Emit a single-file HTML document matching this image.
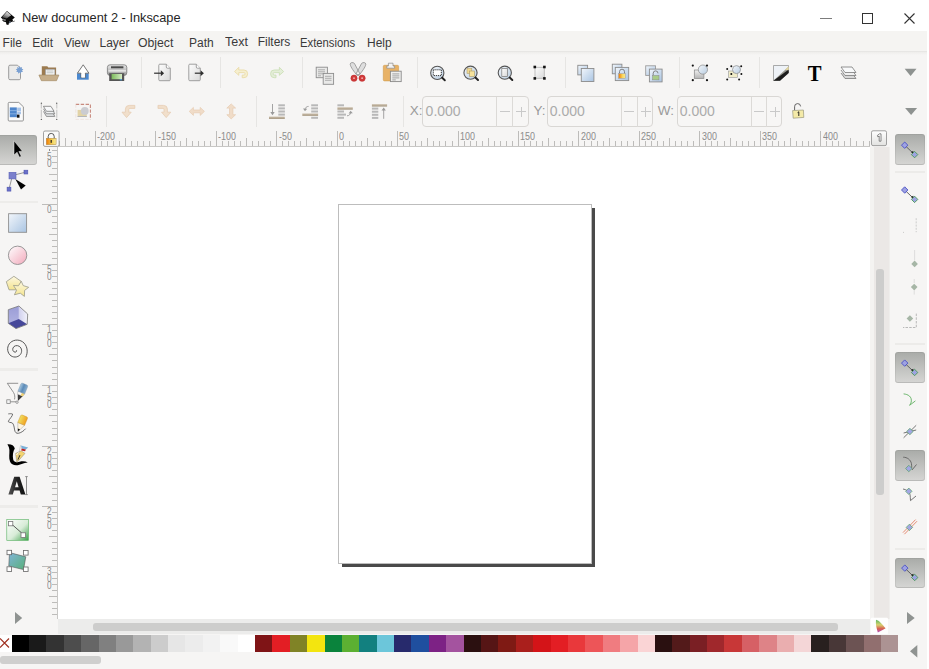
<!DOCTYPE html>
<html><head><meta charset="utf-8"><style>
html,body{margin:0;padding:0;}
body{width:929px;height:669px;overflow:hidden;position:relative;background:#f6f5f4;font-family:"Liberation Sans",sans-serif;}
svg{overflow:visible}
</style></head><body>
<div style="position:absolute;left:0px;top:0px;width:929px;height:31px;background:#fff"></div><div style="position:absolute;left:22.2px;top:11.6px;white-space:nowrap;font-size:12.6px;line-height:12px;color:#262626;transform:scaleX(1.016);transform-origin:0 0">New document 2 - Inkscape</div><div style="position:absolute;left:820.3px;top:18.1px;width:11.7px;height:1.3px;background:#7c7c7c"></div><div style="position:absolute;left:861.9px;top:12.9px;width:9.3px;height:9.6px;border:1px solid #333"></div><svg style="position:absolute;left:904px;top:13px" width="11" height="11" viewBox="0 0 11 11"><path d="M0.5 0.5L10.5 10.5M10.5 0.5L0.5 10.5" stroke="#333" stroke-width="1.1"/></svg><div style="position:absolute;left:0px;top:31px;width:927px;height:20px;background:#f5f4f2"></div><div style="position:absolute;left:2.6px;top:37px;white-space:nowrap;font-size:12px;line-height:12px;color:#3a3a3a;transform:scaleX(1);transform-origin:0 0">File</div><div style="position:absolute;left:32.3px;top:37px;white-space:nowrap;font-size:12px;line-height:12px;color:#3a3a3a;transform:scaleX(1);transform-origin:0 0">Edit</div><div style="position:absolute;left:63.9px;top:37px;white-space:nowrap;font-size:12px;line-height:12px;color:#3a3a3a;transform:scaleX(1);transform-origin:0 0">View</div><div style="position:absolute;left:99.5px;top:37px;white-space:nowrap;font-size:12px;line-height:12px;color:#3a3a3a;transform:scaleX(1);transform-origin:0 0">Layer</div><div style="position:absolute;left:138.2px;top:37px;white-space:nowrap;font-size:12px;line-height:12px;color:#3a3a3a;transform:scaleX(1.02);transform-origin:0 0">Object</div><div style="position:absolute;left:189px;top:37px;white-space:nowrap;font-size:12px;line-height:12px;color:#3a3a3a;transform:scaleX(1);transform-origin:0 0">Path</div><div style="position:absolute;left:224.5px;top:36px;white-space:nowrap;font-size:12px;line-height:12px;color:#3a3a3a;transform:scaleX(1.04);transform-origin:0 0">Text</div><div style="position:absolute;left:257.7px;top:36px;white-space:nowrap;font-size:12px;line-height:12px;color:#3a3a3a;transform:scaleX(1);transform-origin:0 0">Filters</div><div style="position:absolute;left:300.3px;top:37px;white-space:nowrap;font-size:12px;line-height:12px;color:#3a3a3a;transform:scaleX(0.94);transform-origin:0 0">Extensions</div><div style="position:absolute;left:367px;top:37px;white-space:nowrap;font-size:12px;line-height:12px;color:#3a3a3a;transform:scaleX(1);transform-origin:0 0">Help</div><div style="position:absolute;left:0px;top:51px;width:927px;height:77px;background:#f6f5f4"></div><div style="position:absolute;left:0px;top:51px;width:927px;height:1px;background:#e7e6e4"></div><div style="position:absolute;left:0px;top:52px;width:927px;height:3px;background:linear-gradient(#eeedeb,#f6f5f4)"></div><div style="position:absolute;left:141px;top:57px;width:1px;height:31px;background:#e6e5e3"></div><div style="position:absolute;left:220px;top:57px;width:1px;height:31px;background:#e6e5e3"></div><div style="position:absolute;left:302px;top:57px;width:1px;height:31px;background:#e6e5e3"></div><div style="position:absolute;left:416.5px;top:57px;width:1px;height:31px;background:#e6e5e3"></div><div style="position:absolute;left:564.5px;top:57px;width:1px;height:31px;background:#e6e5e3"></div><div style="position:absolute;left:678.5px;top:57px;width:1px;height:31px;background:#e6e5e3"></div><div style="position:absolute;left:759px;top:57px;width:1px;height:31px;background:#e6e5e3"></div><div style="position:absolute;left:106px;top:96px;width:1px;height:31px;background:#e6e5e3"></div><div style="position:absolute;left:255.7px;top:96px;width:1px;height:31px;background:#e6e5e3"></div><div style="position:absolute;left:402.7px;top:96px;width:1px;height:31px;background:#e6e5e3"></div><div style="position:absolute;left:409.8px;top:104px;white-space:nowrap;font-size:13.5px;line-height:14px;color:#9a9a9a">X:</div><div style="position:absolute;left:422.3px;top:95.7px;width:106.49999999999994px;height:31.7px;box-sizing:border-box;border:1px solid #d9d7d4;border-radius:4px;background:#f7f6f5"></div><div style="position:absolute;left:496.4px;top:96.5px;width:1px;height:30px;background:#dcdad7"></div><div style="position:absolute;left:512.3px;top:96.5px;width:1px;height:30px;background:#dcdad7"></div><div style="position:absolute;left:425.6px;top:104px;white-space:nowrap;font-size:14px;line-height:14px;color:#ababab">0.000</div><div style="position:absolute;left:499.9px;top:111px;width:10px;height:1px;background:#c9c9c9"></div><div style="position:absolute;left:516.3px;top:111px;width:10px;height:1px;background:#c9c9c9"></div><div style="position:absolute;left:520.8px;top:106.5px;width:1px;height:10px;background:#c9c9c9"></div><div style="position:absolute;left:533.5px;top:104px;white-space:nowrap;font-size:13.5px;line-height:14px;color:#9a9a9a">Y:</div><div style="position:absolute;left:546.5px;top:95.7px;width:106.20000000000005px;height:31.7px;box-sizing:border-box;border:1px solid #d9d7d4;border-radius:4px;background:#f7f6f5"></div><div style="position:absolute;left:620.7px;top:96.5px;width:1px;height:30px;background:#dcdad7"></div><div style="position:absolute;left:636.5px;top:96.5px;width:1px;height:30px;background:#dcdad7"></div><div style="position:absolute;left:549.8px;top:104px;white-space:nowrap;font-size:14px;line-height:14px;color:#ababab">0.000</div><div style="position:absolute;left:624.2px;top:111px;width:10px;height:1px;background:#c9c9c9"></div><div style="position:absolute;left:640.5px;top:111px;width:10px;height:1px;background:#c9c9c9"></div><div style="position:absolute;left:645.0px;top:106.5px;width:1px;height:10px;background:#c9c9c9"></div><div style="position:absolute;left:657.7px;top:104px;white-space:nowrap;font-size:13.5px;line-height:14px;color:#9a9a9a">W:</div><div style="position:absolute;left:676.5px;top:95.7px;width:105.5px;height:31.7px;box-sizing:border-box;border:1px solid #d9d7d4;border-radius:4px;background:#f7f6f5"></div><div style="position:absolute;left:750.5px;top:96.5px;width:1px;height:30px;background:#dcdad7"></div><div style="position:absolute;left:766px;top:96.5px;width:1px;height:30px;background:#dcdad7"></div><div style="position:absolute;left:679.8px;top:104px;white-space:nowrap;font-size:14px;line-height:14px;color:#ababab">0.000</div><div style="position:absolute;left:754.0px;top:111px;width:10px;height:1px;background:#c9c9c9"></div><div style="position:absolute;left:770px;top:111px;width:10px;height:1px;background:#c9c9c9"></div><div style="position:absolute;left:774.5px;top:106.5px;width:1px;height:10px;background:#c9c9c9"></div><div style="position:absolute;left:58px;top:128px;width:812px;height:19px;background:#f6f5f4"></div><div style="position:absolute;left:38px;top:147px;width:20px;height:472px;background:#f6f5f4"></div><svg style="position:absolute;left:58px;top:128px" width="812" height="19" viewBox="0 0 812 19"><g stroke="#bdbcba" stroke-width="1"><line x1="1.5" y1="13" x2="1.5" y2="19" /><line x1="7.5" y1="10" x2="7.5" y2="19" /><line x1="13.5" y1="13" x2="13.5" y2="19" /><line x1="19.5" y1="13" x2="19.5" y2="19" /><line x1="25.5" y1="13" x2="25.5" y2="19" /><line x1="31.5" y1="13" x2="31.5" y2="19" /><line x1="37.5" y1="3" x2="37.5" y2="19" /><line x1="43.5" y1="13" x2="43.5" y2="19" /><line x1="49.5" y1="13" x2="49.5" y2="19" /><line x1="55.5" y1="13" x2="55.5" y2="19" /><line x1="61.5" y1="13" x2="61.5" y2="19" /><line x1="67.5" y1="10" x2="67.5" y2="19" /><line x1="73.5" y1="13" x2="73.5" y2="19" /><line x1="79.5" y1="13" x2="79.5" y2="19" /><line x1="85.5" y1="13" x2="85.5" y2="19" /><line x1="91.5" y1="13" x2="91.5" y2="19" /><line x1="97.5" y1="3" x2="97.5" y2="19" /><line x1="103.5" y1="13" x2="103.5" y2="19" /><line x1="109.5" y1="13" x2="109.5" y2="19" /><line x1="116.5" y1="13" x2="116.5" y2="19" /><line x1="122.5" y1="13" x2="122.5" y2="19" /><line x1="128.5" y1="10" x2="128.5" y2="19" /><line x1="134.5" y1="13" x2="134.5" y2="19" /><line x1="140.5" y1="13" x2="140.5" y2="19" /><line x1="146.5" y1="13" x2="146.5" y2="19" /><line x1="152.5" y1="13" x2="152.5" y2="19" /><line x1="158.5" y1="3" x2="158.5" y2="19" /><line x1="164.5" y1="13" x2="164.5" y2="19" /><line x1="170.5" y1="13" x2="170.5" y2="19" /><line x1="176.5" y1="13" x2="176.5" y2="19" /><line x1="182.5" y1="13" x2="182.5" y2="19" /><line x1="188.5" y1="10" x2="188.5" y2="19" /><line x1="194.5" y1="13" x2="194.5" y2="19" /><line x1="200.5" y1="13" x2="200.5" y2="19" /><line x1="206.5" y1="13" x2="206.5" y2="19" /><line x1="212.5" y1="13" x2="212.5" y2="19" /><line x1="218.5" y1="3" x2="218.5" y2="19" /><line x1="224.5" y1="13" x2="224.5" y2="19" /><line x1="230.5" y1="13" x2="230.5" y2="19" /><line x1="236.5" y1="13" x2="236.5" y2="19" /><line x1="242.5" y1="13" x2="242.5" y2="19" /><line x1="248.5" y1="10" x2="248.5" y2="19" /><line x1="255.5" y1="13" x2="255.5" y2="19" /><line x1="261.5" y1="13" x2="261.5" y2="19" /><line x1="267.5" y1="13" x2="267.5" y2="19" /><line x1="273.5" y1="13" x2="273.5" y2="19" /><line x1="279.5" y1="3" x2="279.5" y2="19" /><line x1="285.5" y1="13" x2="285.5" y2="19" /><line x1="291.5" y1="13" x2="291.5" y2="19" /><line x1="297.5" y1="13" x2="297.5" y2="19" /><line x1="303.5" y1="13" x2="303.5" y2="19" /><line x1="309.5" y1="10" x2="309.5" y2="19" /><line x1="315.5" y1="13" x2="315.5" y2="19" /><line x1="321.5" y1="13" x2="321.5" y2="19" /><line x1="327.5" y1="13" x2="327.5" y2="19" /><line x1="333.5" y1="13" x2="333.5" y2="19" /><line x1="339.5" y1="3" x2="339.5" y2="19" /><line x1="345.5" y1="13" x2="345.5" y2="19" /><line x1="351.5" y1="13" x2="351.5" y2="19" /><line x1="357.5" y1="13" x2="357.5" y2="19" /><line x1="363.5" y1="13" x2="363.5" y2="19" /><line x1="369.5" y1="10" x2="369.5" y2="19" /><line x1="375.5" y1="13" x2="375.5" y2="19" /><line x1="381.5" y1="13" x2="381.5" y2="19" /><line x1="387.5" y1="13" x2="387.5" y2="19" /><line x1="394.5" y1="13" x2="394.5" y2="19" /><line x1="400.5" y1="3" x2="400.5" y2="19" /><line x1="406.5" y1="13" x2="406.5" y2="19" /><line x1="412.5" y1="13" x2="412.5" y2="19" /><line x1="418.5" y1="13" x2="418.5" y2="19" /><line x1="424.5" y1="13" x2="424.5" y2="19" /><line x1="430.5" y1="10" x2="430.5" y2="19" /><line x1="436.5" y1="13" x2="436.5" y2="19" /><line x1="442.5" y1="13" x2="442.5" y2="19" /><line x1="448.5" y1="13" x2="448.5" y2="19" /><line x1="454.5" y1="13" x2="454.5" y2="19" /><line x1="460.5" y1="3" x2="460.5" y2="19" /><line x1="466.5" y1="13" x2="466.5" y2="19" /><line x1="472.5" y1="13" x2="472.5" y2="19" /><line x1="478.5" y1="13" x2="478.5" y2="19" /><line x1="484.5" y1="13" x2="484.5" y2="19" /><line x1="490.5" y1="10" x2="490.5" y2="19" /><line x1="496.5" y1="13" x2="496.5" y2="19" /><line x1="502.5" y1="13" x2="502.5" y2="19" /><line x1="508.5" y1="13" x2="508.5" y2="19" /><line x1="514.5" y1="13" x2="514.5" y2="19" /><line x1="520.5" y1="3" x2="520.5" y2="19" /><line x1="526.5" y1="13" x2="526.5" y2="19" /><line x1="533.5" y1="13" x2="533.5" y2="19" /><line x1="539.5" y1="13" x2="539.5" y2="19" /><line x1="545.5" y1="13" x2="545.5" y2="19" /><line x1="551.5" y1="10" x2="551.5" y2="19" /><line x1="557.5" y1="13" x2="557.5" y2="19" /><line x1="563.5" y1="13" x2="563.5" y2="19" /><line x1="569.5" y1="13" x2="569.5" y2="19" /><line x1="575.5" y1="13" x2="575.5" y2="19" /><line x1="581.5" y1="3" x2="581.5" y2="19" /><line x1="587.5" y1="13" x2="587.5" y2="19" /><line x1="593.5" y1="13" x2="593.5" y2="19" /><line x1="599.5" y1="13" x2="599.5" y2="19" /><line x1="605.5" y1="13" x2="605.5" y2="19" /><line x1="611.5" y1="10" x2="611.5" y2="19" /><line x1="617.5" y1="13" x2="617.5" y2="19" /><line x1="623.5" y1="13" x2="623.5" y2="19" /><line x1="629.5" y1="13" x2="629.5" y2="19" /><line x1="635.5" y1="13" x2="635.5" y2="19" /><line x1="641.5" y1="3" x2="641.5" y2="19" /><line x1="647.5" y1="13" x2="647.5" y2="19" /><line x1="653.5" y1="13" x2="653.5" y2="19" /><line x1="659.5" y1="13" x2="659.5" y2="19" /><line x1="666.5" y1="13" x2="666.5" y2="19" /><line x1="672.5" y1="10" x2="672.5" y2="19" /><line x1="678.5" y1="13" x2="678.5" y2="19" /><line x1="684.5" y1="13" x2="684.5" y2="19" /><line x1="690.5" y1="13" x2="690.5" y2="19" /><line x1="696.5" y1="13" x2="696.5" y2="19" /><line x1="702.5" y1="3" x2="702.5" y2="19" /><line x1="708.5" y1="13" x2="708.5" y2="19" /><line x1="714.5" y1="13" x2="714.5" y2="19" /><line x1="720.5" y1="13" x2="720.5" y2="19" /><line x1="726.5" y1="13" x2="726.5" y2="19" /><line x1="732.5" y1="10" x2="732.5" y2="19" /><line x1="738.5" y1="13" x2="738.5" y2="19" /><line x1="744.5" y1="13" x2="744.5" y2="19" /><line x1="750.5" y1="13" x2="750.5" y2="19" /><line x1="756.5" y1="13" x2="756.5" y2="19" /><line x1="762.5" y1="3" x2="762.5" y2="19" /><line x1="768.5" y1="13" x2="768.5" y2="19" /><line x1="774.5" y1="13" x2="774.5" y2="19" /><line x1="780.5" y1="13" x2="780.5" y2="19" /><line x1="786.5" y1="13" x2="786.5" y2="19" /><line x1="792.5" y1="10" x2="792.5" y2="19" /><line x1="798.5" y1="13" x2="798.5" y2="19" /><line x1="805.5" y1="13" x2="805.5" y2="19" /><line x1="811.5" y1="13" x2="811.5" y2="19" /></g><rect x="0" y="18" width="812" height="1" fill="#c8c7c5"/></svg><div style="position:absolute;left:97.24999999999999px;top:131.6px;white-space:nowrap;font-size:10.4px;line-height:9px;color:#8c8c8c;transform:scaleX(0.86);transform-origin:0 0">&#8209;200</div><div style="position:absolute;left:157.6875px;top:131.6px;white-space:nowrap;font-size:10.4px;line-height:9px;color:#8c8c8c;transform:scaleX(0.86);transform-origin:0 0">&#8209;150</div><div style="position:absolute;left:218.125px;top:131.6px;white-space:nowrap;font-size:10.4px;line-height:9px;color:#8c8c8c;transform:scaleX(0.86);transform-origin:0 0">&#8209;100</div><div style="position:absolute;left:278.5625px;top:131.6px;white-space:nowrap;font-size:10.4px;line-height:9px;color:#8c8c8c;transform:scaleX(0.86);transform-origin:0 0">&#8209;50</div><div style="position:absolute;left:339.0px;top:131.6px;white-space:nowrap;font-size:10.4px;line-height:9px;color:#8c8c8c;transform:scaleX(0.86);transform-origin:0 0">0</div><div style="position:absolute;left:399.4375px;top:131.6px;white-space:nowrap;font-size:10.4px;line-height:9px;color:#8c8c8c;transform:scaleX(0.86);transform-origin:0 0">50</div><div style="position:absolute;left:459.875px;top:131.6px;white-space:nowrap;font-size:10.4px;line-height:9px;color:#8c8c8c;transform:scaleX(0.86);transform-origin:0 0">100</div><div style="position:absolute;left:520.3125px;top:131.6px;white-space:nowrap;font-size:10.4px;line-height:9px;color:#8c8c8c;transform:scaleX(0.86);transform-origin:0 0">150</div><div style="position:absolute;left:580.75px;top:131.6px;white-space:nowrap;font-size:10.4px;line-height:9px;color:#8c8c8c;transform:scaleX(0.86);transform-origin:0 0">200</div><div style="position:absolute;left:641.1875px;top:131.6px;white-space:nowrap;font-size:10.4px;line-height:9px;color:#8c8c8c;transform:scaleX(0.86);transform-origin:0 0">250</div><div style="position:absolute;left:701.625px;top:131.6px;white-space:nowrap;font-size:10.4px;line-height:9px;color:#8c8c8c;transform:scaleX(0.86);transform-origin:0 0">300</div><div style="position:absolute;left:762.0625px;top:131.6px;white-space:nowrap;font-size:10.4px;line-height:9px;color:#8c8c8c;transform:scaleX(0.86);transform-origin:0 0">350</div><div style="position:absolute;left:822.5px;top:131.6px;white-space:nowrap;font-size:10.4px;line-height:9px;color:#8c8c8c;transform:scaleX(0.86);transform-origin:0 0">400</div><svg style="position:absolute;left:38px;top:147px" width="20" height="472" viewBox="0 0 20 472"><g stroke="#bdbcba" stroke-width="1"><line x1="14" y1="3.5" x2="20" y2="3.5" /><line x1="14" y1="9.5" x2="20" y2="9.5" /><line x1="14" y1="15.5" x2="20" y2="15.5" /><line x1="14" y1="21.5" x2="20" y2="21.5" /><line x1="11" y1="27.5" x2="20" y2="27.5" /><line x1="14" y1="33.5" x2="20" y2="33.5" /><line x1="14" y1="39.5" x2="20" y2="39.5" /><line x1="14" y1="45.5" x2="20" y2="45.5" /><line x1="14" y1="51.5" x2="20" y2="51.5" /><line x1="4" y1="57.5" x2="20" y2="57.5" /><line x1="14" y1="63.5" x2="20" y2="63.5" /><line x1="14" y1="69.5" x2="20" y2="69.5" /><line x1="14" y1="75.5" x2="20" y2="75.5" /><line x1="14" y1="81.5" x2="20" y2="81.5" /><line x1="11" y1="87.5" x2="20" y2="87.5" /><line x1="14" y1="93.5" x2="20" y2="93.5" /><line x1="14" y1="99.5" x2="20" y2="99.5" /><line x1="14" y1="105.5" x2="20" y2="105.5" /><line x1="14" y1="111.5" x2="20" y2="111.5" /><line x1="4" y1="117.5" x2="20" y2="117.5" /><line x1="14" y1="123.5" x2="20" y2="123.5" /><line x1="14" y1="129.5" x2="20" y2="129.5" /><line x1="14" y1="135.5" x2="20" y2="135.5" /><line x1="14" y1="141.5" x2="20" y2="141.5" /><line x1="11" y1="147.5" x2="20" y2="147.5" /><line x1="14" y1="153.5" x2="20" y2="153.5" /><line x1="14" y1="159.5" x2="20" y2="159.5" /><line x1="14" y1="165.5" x2="20" y2="165.5" /><line x1="14" y1="171.5" x2="20" y2="171.5" /><line x1="4" y1="177.5" x2="20" y2="177.5" /><line x1="14" y1="183.5" x2="20" y2="183.5" /><line x1="14" y1="189.5" x2="20" y2="189.5" /><line x1="14" y1="195.5" x2="20" y2="195.5" /><line x1="14" y1="201.5" x2="20" y2="201.5" /><line x1="11" y1="207.5" x2="20" y2="207.5" /><line x1="14" y1="213.5" x2="20" y2="213.5" /><line x1="14" y1="220.5" x2="20" y2="220.5" /><line x1="14" y1="226.5" x2="20" y2="226.5" /><line x1="14" y1="232.5" x2="20" y2="232.5" /><line x1="4" y1="238.5" x2="20" y2="238.5" /><line x1="14" y1="244.5" x2="20" y2="244.5" /><line x1="14" y1="250.5" x2="20" y2="250.5" /><line x1="14" y1="256.5" x2="20" y2="256.5" /><line x1="14" y1="262.5" x2="20" y2="262.5" /><line x1="11" y1="268.5" x2="20" y2="268.5" /><line x1="14" y1="274.5" x2="20" y2="274.5" /><line x1="14" y1="281.5" x2="20" y2="281.5" /><line x1="14" y1="287.5" x2="20" y2="287.5" /><line x1="14" y1="293.5" x2="20" y2="293.5" /><line x1="4" y1="299.5" x2="20" y2="299.5" /><line x1="14" y1="305.5" x2="20" y2="305.5" /><line x1="14" y1="311.5" x2="20" y2="311.5" /><line x1="14" y1="317.5" x2="20" y2="317.5" /><line x1="14" y1="323.5" x2="20" y2="323.5" /><line x1="11" y1="329.5" x2="20" y2="329.5" /><line x1="14" y1="335.5" x2="20" y2="335.5" /><line x1="14" y1="341.5" x2="20" y2="341.5" /><line x1="14" y1="347.5" x2="20" y2="347.5" /><line x1="14" y1="353.5" x2="20" y2="353.5" /><line x1="4" y1="359.5" x2="20" y2="359.5" /><line x1="14" y1="365.5" x2="20" y2="365.5" /><line x1="14" y1="371.5" x2="20" y2="371.5" /><line x1="14" y1="377.5" x2="20" y2="377.5" /><line x1="14" y1="383.5" x2="20" y2="383.5" /><line x1="11" y1="389.5" x2="20" y2="389.5" /><line x1="14" y1="395.5" x2="20" y2="395.5" /><line x1="14" y1="401.5" x2="20" y2="401.5" /><line x1="14" y1="407.5" x2="20" y2="407.5" /><line x1="14" y1="413.5" x2="20" y2="413.5" /><line x1="4" y1="419.5" x2="20" y2="419.5" /><line x1="14" y1="425.5" x2="20" y2="425.5" /><line x1="14" y1="431.5" x2="20" y2="431.5" /><line x1="14" y1="437.5" x2="20" y2="437.5" /><line x1="14" y1="443.5" x2="20" y2="443.5" /><line x1="11" y1="449.5" x2="20" y2="449.5" /><line x1="14" y1="455.5" x2="20" y2="455.5" /><line x1="14" y1="461.5" x2="20" y2="461.5" /><line x1="14" y1="467.5" x2="20" y2="467.5" /></g><rect x="19" y="0" width="1" height="472" fill="#c8c7c5"/></svg><div style="position:absolute;left:48.8px;top:148.6px;width:1.1px;height:2.5px;background:#8c8c8c"></div><div style="position:absolute;left:46.9px;top:152.2px;white-space:nowrap;font-size:10.6px;line-height:8px;color:#8c8c8c;transform:scaleX(0.78);transform-origin:0 0">5</div><div style="position:absolute;left:46.9px;top:159.29999999999998px;white-space:nowrap;font-size:10.6px;line-height:8px;color:#8c8c8c;transform:scaleX(0.78);transform-origin:0 0">0</div><div style="position:absolute;left:46.9px;top:205.1px;white-space:nowrap;font-size:10.6px;line-height:8px;color:#8c8c8c;transform:scaleX(0.78);transform-origin:0 0">0</div><div style="position:absolute;left:46.9px;top:265.09999999999997px;white-space:nowrap;font-size:10.6px;line-height:8px;color:#8c8c8c;transform:scaleX(0.78);transform-origin:0 0">5</div><div style="position:absolute;left:46.9px;top:272.2px;white-space:nowrap;font-size:10.6px;line-height:8px;color:#8c8c8c;transform:scaleX(0.78);transform-origin:0 0">0</div><div style="position:absolute;left:46.9px;top:325.09999999999997px;white-space:nowrap;font-size:10.6px;line-height:8px;color:#8c8c8c;transform:scaleX(0.78);transform-origin:0 0">1</div><div style="position:absolute;left:46.9px;top:332.2px;white-space:nowrap;font-size:10.6px;line-height:8px;color:#8c8c8c;transform:scaleX(0.78);transform-origin:0 0">0</div><div style="position:absolute;left:46.9px;top:339.29999999999995px;white-space:nowrap;font-size:10.6px;line-height:8px;color:#8c8c8c;transform:scaleX(0.78);transform-origin:0 0">0</div><div style="position:absolute;left:46.9px;top:386.09999999999997px;white-space:nowrap;font-size:10.6px;line-height:8px;color:#8c8c8c;transform:scaleX(0.78);transform-origin:0 0">1</div><div style="position:absolute;left:46.9px;top:393.2px;white-space:nowrap;font-size:10.6px;line-height:8px;color:#8c8c8c;transform:scaleX(0.78);transform-origin:0 0">5</div><div style="position:absolute;left:46.9px;top:400.29999999999995px;white-space:nowrap;font-size:10.6px;line-height:8px;color:#8c8c8c;transform:scaleX(0.78);transform-origin:0 0">0</div><div style="position:absolute;left:46.9px;top:447.09999999999997px;white-space:nowrap;font-size:10.6px;line-height:8px;color:#8c8c8c;transform:scaleX(0.78);transform-origin:0 0">2</div><div style="position:absolute;left:46.9px;top:454.2px;white-space:nowrap;font-size:10.6px;line-height:8px;color:#8c8c8c;transform:scaleX(0.78);transform-origin:0 0">0</div><div style="position:absolute;left:46.9px;top:461.29999999999995px;white-space:nowrap;font-size:10.6px;line-height:8px;color:#8c8c8c;transform:scaleX(0.78);transform-origin:0 0">0</div><div style="position:absolute;left:46.9px;top:507.09999999999997px;white-space:nowrap;font-size:10.6px;line-height:8px;color:#8c8c8c;transform:scaleX(0.78);transform-origin:0 0">2</div><div style="position:absolute;left:46.9px;top:514.1999999999999px;white-space:nowrap;font-size:10.6px;line-height:8px;color:#8c8c8c;transform:scaleX(0.78);transform-origin:0 0">5</div><div style="position:absolute;left:46.9px;top:521.3px;white-space:nowrap;font-size:10.6px;line-height:8px;color:#8c8c8c;transform:scaleX(0.78);transform-origin:0 0">0</div><div style="position:absolute;left:46.9px;top:567.1px;white-space:nowrap;font-size:10.6px;line-height:8px;color:#8c8c8c;transform:scaleX(0.78);transform-origin:0 0">3</div><div style="position:absolute;left:46.9px;top:574.2px;white-space:nowrap;font-size:10.6px;line-height:8px;color:#8c8c8c;transform:scaleX(0.78);transform-origin:0 0">0</div><div style="position:absolute;left:46.9px;top:581.3000000000001px;white-space:nowrap;font-size:10.6px;line-height:8px;color:#8c8c8c;transform:scaleX(0.78);transform-origin:0 0">0</div><div style="position:absolute;left:58px;top:147px;width:812px;height:472px;background:#fff"></div><div style="position:absolute;left:338px;top:204px;width:254px;height:360px;box-sizing:border-box;border:1px solid #bdbdbd;background:#fff"></div><div style="position:absolute;left:591.8px;top:208px;width:3.2px;height:358.7px;background:#4a4a4a"></div><div style="position:absolute;left:341.5px;top:563.8px;width:253.5px;height:2.9px;background:#4a4a4a"></div><div style="position:absolute;left:870px;top:147px;width:4px;height:472px;background:#f4f3f1"></div><div style="position:absolute;left:874px;top:147px;width:14.7px;height:472px;background:#ebe8e6"></div><div style="position:absolute;left:875.7px;top:269px;width:8.3px;height:225.5px;background:#cdcdcc;border-radius:3px"></div><div style="position:absolute;left:58px;top:619px;width:812px;height:15px;background:#ececeb"></div><div style="position:absolute;left:93.1px;top:622.5px;width:745px;height:8.5px;background:#cdcdcc;border-radius:3px"></div><div style="position:absolute;left:871.3px;top:619px;width:16.5px;height:15px;background:#fbfbfa"></div><div style="position:absolute;left:0px;top:634.5px;width:11.6px;height:17.5px;background:#fff"></div><svg style="position:absolute;left:0px;top:638px" width="10" height="10" viewBox="0 0 10 10"><path d="M0 0.5L9 9.5M9 0.5L0 9.5" stroke="#a03020" stroke-width="1.2"/></svg><div style="position:absolute;left:11.6px;top:634.6px;width:17.436274509803923px;height:17.4px;background:#000000"></div><div style="position:absolute;left:28.98627450980392px;top:634.6px;width:17.436274509803923px;height:17.4px;background:#1a1a1a"></div><div style="position:absolute;left:46.372549019607845px;top:634.6px;width:17.436274509803923px;height:17.4px;background:#333333"></div><div style="position:absolute;left:63.758823529411764px;top:634.6px;width:17.436274509803923px;height:17.4px;background:#4d4d4d"></div><div style="position:absolute;left:81.14509803921568px;top:634.6px;width:17.436274509803923px;height:17.4px;background:#666666"></div><div style="position:absolute;left:98.53137254901961px;top:634.6px;width:17.436274509803923px;height:17.4px;background:#808080"></div><div style="position:absolute;left:115.91764705882352px;top:634.6px;width:17.436274509803923px;height:17.4px;background:#999999"></div><div style="position:absolute;left:133.30392156862746px;top:634.6px;width:17.436274509803923px;height:17.4px;background:#b3b3b3"></div><div style="position:absolute;left:150.69019607843137px;top:634.6px;width:17.436274509803923px;height:17.4px;background:#cccccc"></div><div style="position:absolute;left:168.07647058823528px;top:634.6px;width:17.436274509803923px;height:17.4px;background:#e6e6e6"></div><div style="position:absolute;left:185.46274509803922px;top:634.6px;width:17.436274509803923px;height:17.4px;background:#ececec"></div><div style="position:absolute;left:202.84901960784313px;top:634.6px;width:17.436274509803923px;height:17.4px;background:#f2f2f2"></div><div style="position:absolute;left:220.23529411764704px;top:634.6px;width:17.436274509803923px;height:17.4px;background:#f9f9f9"></div><div style="position:absolute;left:237.62156862745098px;top:634.6px;width:17.436274509803923px;height:17.4px;background:#ffffff"></div><div style="position:absolute;left:255.0078431372549px;top:634.6px;width:17.436274509803923px;height:17.4px;background:#7f1416"></div><div style="position:absolute;left:272.39411764705886px;top:634.6px;width:17.436274509803923px;height:17.4px;background:#e31e24"></div><div style="position:absolute;left:289.7803921568628px;top:634.6px;width:17.436274509803923px;height:17.4px;background:#808326"></div><div style="position:absolute;left:307.1666666666667px;top:634.6px;width:17.436274509803923px;height:17.4px;background:#f3e50f"></div><div style="position:absolute;left:324.5529411764706px;top:634.6px;width:17.436274509803923px;height:17.4px;background:#0a833c"></div><div style="position:absolute;left:341.93921568627457px;top:634.6px;width:17.436274509803923px;height:17.4px;background:#5cb032"></div><div style="position:absolute;left:359.3254901960785px;top:634.6px;width:17.436274509803923px;height:17.4px;background:#12807f"></div><div style="position:absolute;left:376.7117647058824px;top:634.6px;width:17.436274509803923px;height:17.4px;background:#6cc6da"></div><div style="position:absolute;left:394.0980392156863px;top:634.6px;width:17.436274509803923px;height:17.4px;background:#272a6c"></div><div style="position:absolute;left:411.4843137254902px;top:634.6px;width:17.436274509803923px;height:17.4px;background:#1f4f9f"></div><div style="position:absolute;left:428.8705882352941px;top:634.6px;width:17.436274509803923px;height:17.4px;background:#7d2285"></div><div style="position:absolute;left:446.2568627450981px;top:634.6px;width:17.436274509803923px;height:17.4px;background:#a4539f"></div><div style="position:absolute;left:463.643137254902px;top:634.6px;width:17.436274509803923px;height:17.4px;background:#2b1010"></div><div style="position:absolute;left:481.0294117647059px;top:634.6px;width:17.436274509803923px;height:17.4px;background:#561515"></div><div style="position:absolute;left:498.4156862745098px;top:634.6px;width:17.436274509803923px;height:17.4px;background:#7f1a14"></div><div style="position:absolute;left:515.8019607843137px;top:634.6px;width:17.436274509803923px;height:17.4px;background:#aa1f1c"></div><div style="position:absolute;left:533.1882352941177px;top:634.6px;width:17.436274509803923px;height:17.4px;background:#d41418"></div><div style="position:absolute;left:550.5745098039216px;top:634.6px;width:17.436274509803923px;height:17.4px;background:#e31e24"></div><div style="position:absolute;left:567.9607843137255px;top:634.6px;width:17.436274509803923px;height:17.4px;background:#e9383b"></div><div style="position:absolute;left:585.3470588235294px;top:634.6px;width:17.436274509803923px;height:17.4px;background:#ed5558"></div><div style="position:absolute;left:602.7333333333333px;top:634.6px;width:17.436274509803923px;height:17.4px;background:#f07c80"></div><div style="position:absolute;left:620.1196078431373px;top:634.6px;width:17.436274509803923px;height:17.4px;background:#f5a5a8"></div><div style="position:absolute;left:637.5058823529412px;top:634.6px;width:17.436274509803923px;height:17.4px;background:#fad4d5"></div><div style="position:absolute;left:654.8921568627451px;top:634.6px;width:17.436274509803923px;height:17.4px;background:#2a1010"></div><div style="position:absolute;left:672.2784313725491px;top:634.6px;width:17.436274509803923px;height:17.4px;background:#531a1a"></div><div style="position:absolute;left:689.664705882353px;top:634.6px;width:17.436274509803923px;height:17.4px;background:#7a1f24"></div><div style="position:absolute;left:707.0509803921569px;top:634.6px;width:17.436274509803923px;height:17.4px;background:#a0282c"></div><div style="position:absolute;left:724.4372549019608px;top:634.6px;width:17.436274509803923px;height:17.4px;background:#c83737"></div><div style="position:absolute;left:741.8235294117648px;top:634.6px;width:17.436274509803923px;height:17.4px;background:#d66065"></div><div style="position:absolute;left:759.2098039215687px;top:634.6px;width:17.436274509803923px;height:17.4px;background:#de8387"></div><div style="position:absolute;left:776.5960784313726px;top:634.6px;width:17.436274509803923px;height:17.4px;background:#eaaeaf"></div><div style="position:absolute;left:793.9823529411765px;top:634.6px;width:17.436274509803923px;height:17.4px;background:#f4d6d7"></div><div style="position:absolute;left:811.3686274509804px;top:634.6px;width:17.436274509803923px;height:17.4px;background:#28201f"></div><div style="position:absolute;left:828.7549019607843px;top:634.6px;width:17.436274509803923px;height:17.4px;background:#483737"></div><div style="position:absolute;left:846.1411764705882px;top:634.6px;width:17.436274509803923px;height:17.4px;background:#6c5353"></div><div style="position:absolute;left:863.5274509803922px;top:634.6px;width:17.436274509803923px;height:17.4px;background:#916f6f"></div><div style="position:absolute;left:880.9137254901962px;top:634.6px;width:17.436274509803923px;height:17.4px;background:#ac9393"></div><div style="position:absolute;left:0px;top:655.7px;width:100.5px;height:8px;background:#cfcfce;border-radius:3px"></div><div style="position:absolute;left:-3px;top:134.7px;width:39.6px;height:29.9px;background:linear-gradient(#a9aba8,#d6d6d4);border-radius:3px;box-shadow:inset 0 0 0 1px rgba(0,0,0,0.05),inset 0 -1px 0 rgba(0,0,0,0.08)"></div><div style="position:absolute;left:0px;top:200.5px;width:37.7px;height:2.8px;background:#edecea"></div><div style="position:absolute;left:0px;top:368.3px;width:37.7px;height:2.8px;background:#edecea"></div><div style="position:absolute;left:0px;top:504.90000000000003px;width:37.7px;height:2.8px;background:#edecea"></div><svg style="position:absolute;left:15px;top:611.9px" width="8" height="12.1" viewBox="0 0 8 12.1"><path d="M0 0L7.2 6L0 12.1Z" fill="#8f9391"/></svg><div style="position:absolute;left:888.7px;top:147px;width:1px;height:472px;background:#efeeec"></div><div style="position:absolute;left:894.9px;top:134.1px;width:30px;height:30.8px;background:linear-gradient(#a9aba8,#d6d6d4);border-radius:3px;box-shadow:inset 0 0 0 1px rgba(0,0,0,0.05),inset 0 -1px 0 rgba(0,0,0,0.08)"></div><div style="position:absolute;left:894.9px;top:352.4px;width:30px;height:30.8px;background:linear-gradient(#a9aba8,#d6d6d4);border-radius:3px;box-shadow:inset 0 0 0 1px rgba(0,0,0,0.05),inset 0 -1px 0 rgba(0,0,0,0.08)"></div><div style="position:absolute;left:894.9px;top:450.2px;width:30px;height:30.8px;background:linear-gradient(#a9aba8,#d6d6d4);border-radius:3px;box-shadow:inset 0 0 0 1px rgba(0,0,0,0.05),inset 0 -1px 0 rgba(0,0,0,0.08)"></div><div style="position:absolute;left:894.9px;top:557.6px;width:30px;height:30.8px;background:linear-gradient(#a9aba8,#d6d6d4);border-radius:3px;box-shadow:inset 0 0 0 1px rgba(0,0,0,0.05),inset 0 -1px 0 rgba(0,0,0,0.08)"></div><div style="position:absolute;left:895px;top:171.4px;width:30px;height:2px;background:#ecebe9"></div><div style="position:absolute;left:895px;top:343px;width:30px;height:2px;background:#ecebe9"></div><div style="position:absolute;left:895px;top:548px;width:30px;height:2px;background:#ecebe9"></div><svg style="position:absolute;left:907px;top:611.8px" width="8" height="12" viewBox="0 0 8 12"><path d="M0 0L7.7 6L0 12Z" fill="#8f9391"/></svg><svg style="position:absolute;left:909.7px;top:645.2px" width="7.3" height="12.6" viewBox="0 0 7.3 12.6"><path d="M7.3 0L0 6.3L7.3 12.6Z" fill="#8f9391"/></svg><div style="position:absolute;left:927px;top:0px;width:2px;height:669px;background:#fff"></div>
<svg style="position:absolute;left:0;top:0" width="929" height="669" viewBox="0 0 929 669"><defs>
<linearGradient id="gPage" x1="0" y1="0" x2="1" y2="1"><stop offset="0" stop-color="#fdfdfd"/><stop offset="1" stop-color="#d9d9d9"/></linearGradient>
<linearGradient id="gBlue" x1="0" y1="0" x2="1" y2="1"><stop offset="0" stop-color="#f2f6fb"/><stop offset="1" stop-color="#a9c4e2"/></linearGradient>
<linearGradient id="gGray" x1="0" y1="0" x2="0" y2="1"><stop offset="0" stop-color="#f0f0f0"/><stop offset="1" stop-color="#b4b4b4"/></linearGradient>
<linearGradient id="gGreen" x1="0" y1="0" x2="1" y2="1"><stop offset="0" stop-color="#5f9f3f"/><stop offset="0.5" stop-color="#b9dca0"/><stop offset="1" stop-color="#d9ecd0"/></linearGradient>
<linearGradient id="gOrange" x1="0" y1="0" x2="1" y2="0"><stop offset="0" stop-color="#f07c00"/><stop offset="0.6" stop-color="#f8d860"/><stop offset="1" stop-color="#f8e890"/></linearGradient>
<linearGradient id="gLens" x1="0" y1="0" x2="1" y2="1"><stop offset="0" stop-color="#f4f7fb"/><stop offset="1" stop-color="#b8cce0"/></linearGradient>
</defs>
<!-- new doc -->
<path d="M8.7 66.5a1.3 1.3 0 0 1 1.3-1.3h7.5l3 3v10.2a1.3 1.3 0 0 1-1.3 1.3h-9.2a1.3 1.3 0 0 1-1.3-1.3z" fill="#ebebea" stroke="#9b9b9b" stroke-width="1"/>
<path d="M19.60 66.10L20.46 67.65L22.11 67.01L21.77 68.75L23.44 69.32L22.06 70.43L22.98 71.95L21.21 71.92L20.93 73.66L19.60 72.50L18.27 73.66L17.99 71.92L16.22 71.95L17.14 70.43L15.76 69.32L17.43 68.75L17.09 67.01L18.74 67.65z" fill="#7aa0d2"/>
<!-- open folder -->
<path d="M41.8 66.3h5.5l1 1.2h7.8v8h-14.3z" fill="#9c7b50"/>
<rect x="45.3" y="69.2" width="9.6" height="6" fill="#fafafa" stroke="#8b8b8b" stroke-width="0.6"/>
<path d="M46.5 71h7M46.5 72.8h7" stroke="#b9bcb8" stroke-width="0.9"/>
<path d="M38.9 75h20l-2.4 5.7h-15.1z" fill="#c6ae8a" stroke="#a08660" stroke-width="0.6"/>
<!-- save -->
<path d="M77 73.3h11.7v6.4h-11.7z" fill="#4b89d0"/>
<path d="M83.2 64.8l-5.8 8.4h3.6v4.5h4.3v-4.5h3.6z" fill="#fff" stroke="#555" stroke-width="0.8" stroke-linejoin="round"/>
<path d="M81.4 73.6v4h3.5v-4" fill="#fff"/>
<!-- print -->
<linearGradient id="gPrn" x1="0" y1="0" x2="0" y2="1"><stop offset="0" stop-color="#e6e6e6"/><stop offset="1" stop-color="#9c9c9c"/></linearGradient>
<linearGradient id="gPaper" x1="0" y1="0" x2="1" y2="0"><stop offset="0" stop-color="#7cba5c"/><stop offset="1" stop-color="#d4ecc4"/></linearGradient>
<rect x="107.4" y="64.8" width="19.4" height="10.6" rx="2.6" fill="url(#gPrn)" stroke="#7a7a7a" stroke-width="0.8"/>
<rect x="111" y="66.3" width="12.4" height="2" fill="#4a4a4a"/>
<rect x="108.4" y="70.3" width="17.6" height="1.2" fill="#f4f4f4"/>
<rect x="109.2" y="73.2" width="15" height="7.8" fill="#555"/>
<rect x="111.6" y="74" width="10.4" height="5.2" fill="url(#gPaper)"/>
<rect x="119.8" y="79.2" width="2.2" height="1.1" fill="#4da0e0"/>
<!-- import -->
<path d="M158.8 65.2a1 1 0 0 1 1-1h6.5l4 4v11.5a1 1 0 0 1-1 1h-9.5a1 1 0 0 1-1-1z" fill="url(#gPage)" stroke="#969696" stroke-width="0.9"/>
<path d="M166.3 64.2v2.8a1.2 1.2 0 0 0 1.2 1.2h2.8" fill="#fff" stroke="#969696" stroke-width="0.9"/>
<path d="M154.1 73.2h7" stroke="#2f2f2f" stroke-width="1.2"/>
<path d="M160.8 70.2l3.3 3-3.3 3z" fill="#2f2f2f"/>
<!-- export -->
<path d="M188.8 65.2a1 1 0 0 1 1-1h6.5l4 4v11.5a1 1 0 0 1-1 1h-9.5a1 1 0 0 1-1-1z" fill="url(#gPage)" stroke="#969696" stroke-width="0.9"/>
<path d="M196.3 64.2v2.8a1.2 1.2 0 0 0 1.2 1.2h2.8" fill="#fff" stroke="#969696" stroke-width="0.9"/>
<path d="M194.8 73.2h6.5" stroke="#2f2f2f" stroke-width="1.2"/>
<path d="M200.6 70.2l3.3 3-3.3 3z" fill="#2f2f2f"/>
<!-- undo -->
<path d="M234.6 71.6l4.2-4.3v2.7h5.2a3.6 3.6 0 0 1 3.6 3.6v0.5a3.6 3.6 0 0 1-3.6 3.6h-1.8v-2.6h1.8a1 1 0 0 0 1-1v-0.5a1 1 0 0 0-1-1h-5.2v2.7z" fill="#f6efcf" stroke="#eadba8" stroke-width="0.9" stroke-linejoin="round"/>
<!-- redo -->
<path d="M283.6 71.6l-4.2-4.3v2.7h-5.2a3.6 3.6 0 0 0-3.6 3.6v0.5a3.6 3.6 0 0 0 3.6 3.6h1.8v-2.6h-1.8a1 1 0 0 1-1-1v-0.5a1 1 0 0 1 1-1h5.2v2.7z" fill="#e4eed8" stroke="#cde0b8" stroke-width="0.9" stroke-linejoin="round"/>
<!-- duplicate -->
<rect x="316.2" y="67.2" width="11.2" height="10.5" fill="#e9e9e8" stroke="#8d8d8d" stroke-width="0.9"/>
<path d="M318 69.8h7M318 71.8h7M318 73.8h7M318 75.8h3" stroke="#a6a6a6" stroke-width="0.9"/>
<rect x="323.2" y="73.4" width="10.4" height="10.9" fill="#e9e9e8" stroke="#8d8d8d" stroke-width="0.9"/>
<path d="M325 76.3h6.5M325 78.3h6.5M325 80.3h6.5" stroke="#a6a6a6" stroke-width="0.9"/>
<!-- cut -->
<path d="M350.2 64.2C350.2 62.4 353 62 354.4 63.4L359.8 73.6L357.2 75.6C354.4 72 350.4 67 350.2 64.2Z M365.8 64.2C365.8 62.4 363 62 361.6 63.4L356.2 73.6L358.8 75.6C361.6 72 365.6 67 365.8 64.2Z" fill="#dedede" stroke="#8e8e8e" stroke-width="0.8" stroke-linejoin="round"/>
<circle cx="354" cy="78.2" r="3.1" fill="#d03a3a" stroke="#c02828" stroke-width="0.6"/>
<circle cx="362.1" cy="78.2" r="3.1" fill="#d03a3a" stroke="#c02828" stroke-width="0.6"/>
<circle cx="354" cy="78.2" r="0.9" fill="#f3b0b0"/>
<circle cx="362.1" cy="78.2" r="0.9" fill="#f3b0b0"/>
<!-- paste -->
<rect x="383.3" y="65.3" width="15.3" height="15.6" rx="1.2" fill="#e8b266" stroke="#cf9a4e" stroke-width="0.6"/>
<path d="M386.8 68.2v-2.2h1.6v-2.8h4.6v2.8h1.6v2.2z" fill="#f3f3f3" stroke="#8b8b8b" stroke-width="0.7"/>
<rect x="390.4" y="71.2" width="10.8" height="10.4" fill="#eeeeed" stroke="#8a8a8a" stroke-width="0.9"/>
<path d="M392.3 73.9h7M392.3 75.9h7M392.3 77.9h7M392.3 79.9h3.5" stroke="#9a9a9a" stroke-width="0.9"/>
<!-- zoom selection -->
<circle cx="437.3" cy="72.9" r="6.6" fill="url(#gLens)" stroke="#555" stroke-width="1.1"/>
<path d="M442.2 77.8l2.6 2.4" stroke="#222" stroke-width="2" stroke-linecap="round"/>
<rect x="433.3" y="69.8" width="8" height="5.8" fill="#fff" stroke="#222" stroke-width="0.9" stroke-dasharray="1.2 0.8"/>
<!-- zoom drawing -->
<circle cx="470.5" cy="72.7" r="6.6" fill="url(#gLens)" stroke="#555" stroke-width="1.1"/>
<path d="M475.4 77.6l2.6 2.4" stroke="#222" stroke-width="2" stroke-linecap="round"/>
<rect x="467" y="68.2" width="4.8" height="5.2" fill="#f0d890" stroke="#b0a070" stroke-width="0.6"/>
<rect x="469.6" y="71" width="4.8" height="5.4" fill="#f6e29a" stroke="#a89868" stroke-width="0.6"/>
<!-- zoom page -->
<circle cx="504.8" cy="72.7" r="6.6" fill="url(#gLens)" stroke="#555" stroke-width="1.1"/>
<path d="M509.7 77.6l2.6 2.4" stroke="#222" stroke-width="2" stroke-linecap="round"/>
<rect x="501.8" y="68.6" width="5.6" height="8" fill="url(#gPage)" stroke="#777" stroke-width="0.7"/>
<!-- zoom full -->
<rect x="535" y="67.2" width="9.2" height="11" fill="url(#gPage)" stroke="#999" stroke-width="0.6"/>
<rect x="533.5" y="65.7" width="2.6" height="2.6" fill="#111"/><rect x="543.1" y="65.7" width="2.6" height="2.6" fill="#111"/>
<rect x="533.5" y="77.1" width="2.6" height="2.6" fill="#111"/><rect x="543.1" y="77.1" width="2.6" height="2.6" fill="#111"/>
<!-- group -->
<rect x="577.8" y="65.3" width="9.8" height="9.6" fill="url(#gBlue)" stroke="#8c8c8c" stroke-width="0.9"/>
<rect x="581.3" y="68.5" width="12.6" height="13" fill="url(#gBlue)" stroke="#8c8c8c" stroke-width="0.9"/>
<!-- lock objects -->
<rect x="612.3" y="64.2" width="9.6" height="9.6" fill="url(#gBlue)" stroke="#8c8c8c" stroke-width="0.9"/>
<rect x="615.3" y="67.4" width="13.4" height="13.2" fill="url(#gBlue)" stroke="#8c8c8c" stroke-width="0.9"/>
<path d="M619.5 73.5v-1.8a2.5 2.5 0 0 1 5 0v1.8" fill="none" stroke="#777" stroke-width="0.9"/>
<rect x="618.6" y="73.7" width="6.8" height="4.6" fill="url(#gOrange)" stroke="#999" stroke-width="0.5"/>
<!-- unlock -->
<rect x="645.7" y="65.8" width="9.8" height="9.6" fill="url(#gBlue)" stroke="#9a9a9a" stroke-width="0.9"/>
<rect x="649.4" y="69.1" width="12.7" height="12.8" fill="url(#gBlue)" stroke="#8c8c8c" stroke-width="0.9"/>
<path d="M653.2 75.3v-2a2.4 2.4 0 0 1 4.8 0" fill="none" stroke="#777" stroke-width="0.9"/>
<rect x="652.6" y="75.5" width="6.4" height="4.4" fill="#a8cc88" stroke="#888" stroke-width="0.5"/>
<!-- select-ish 1 -->
<rect x="694.3" y="70" width="9.6" height="8.5" fill="url(#gGray)" stroke="#888" stroke-width="0.7"/>
<circle cx="702.9" cy="69.6" r="4.6" fill="url(#gLens)" stroke="#888" stroke-width="0.7"/>
<circle cx="692.8" cy="65.6" r="1.1" fill="#111"/><circle cx="707" cy="65.6" r="1.1" fill="#111"/>
<circle cx="692.8" cy="80.2" r="1.1" fill="#111"/><circle cx="707" cy="80.2" r="1.1" fill="#111"/>
<!-- select-ish 2 -->
<rect x="728.6" y="71" width="9" height="6.5" fill="#f0ecc8" stroke="#999" stroke-width="0.6"/>
<circle cx="736.5" cy="69.6" r="4" fill="url(#gLens)" stroke="#888" stroke-width="0.7"/>
<circle cx="731.3" cy="66.2" r="1" fill="#111"/><circle cx="741.2" cy="66.2" r="1" fill="#111"/>
<circle cx="727.2" cy="69" r="1" fill="#111"/><circle cx="731.3" cy="73.9" r="1" fill="#111"/>
<circle cx="741.4" cy="73.9" r="1" fill="#111"/><circle cx="727.2" cy="79.5" r="1" fill="#111"/><circle cx="739.1" cy="79.5" r="1" fill="#111"/>
<!-- fill & stroke -->
<path d="M773.5 65.5h15v7.4l-8.6 7.6h-6.4z" fill="#eef2f7" stroke="#8a8a8a" stroke-width="0.7"/>
<path d="M773.3 80.8L788.7 66.4v3.6L777.8 80.8z" fill="#9a9a92"/>
<path d="M773.3 80.8L788.7 69.6v3.4L780 80.8z" fill="#1c1c1c"/>
<path d="M785 69.8L788.7 66.2v4z" fill="#e2d6a0"/>
<!-- text T -->
<text x="814.6" y="80.6" text-anchor="middle" font-family="Liberation Serif" font-weight="bold" font-size="22.5" fill="#000" transform="translate(814.6 80.6) scale(0.92 1) translate(-814.6 -80.6)">T</text>
<!-- layers -->
<path d="M841 73l4 5.5h11l-4-5.5" fill="#d8d8d8" stroke="#7a7a7a" stroke-width="0.8" stroke-linejoin="round"/>
<path d="M841 70l4 5.5h11l-4-5.5" fill="#f0f0f0" stroke="#7a7a7a" stroke-width="0.8" stroke-linejoin="round"/>
<path d="M841 67h11l4 5.5h-11z" fill="#f8f9fa" stroke="#7a7a7a" stroke-width="0.8" stroke-linejoin="round"/>
<!-- dropdown -->
<path d="M904.7 68.8h11.8l-5.9 7.2z" fill="#8e9290"/>
<path d="M905.1 108h12l-6 6.9z" fill="#8e9290"/>
<defs>
<linearGradient id="gPink" x1="0" y1="0" x2="1" y2="1"><stop offset="0" stop-color="#ffffff"/><stop offset="1" stop-color="#f2a9bb"/></linearGradient>
<linearGradient id="gYel" x1="0" y1="0" x2="0" y2="1"><stop offset="0" stop-color="#fdf8e2"/><stop offset="1" stop-color="#f4e48e"/></linearGradient>
<linearGradient id="gBoxL" x1="0" y1="0" x2="0" y2="1"><stop offset="0" stop-color="#9a9cd6"/><stop offset="1" stop-color="#b6b8e4"/></linearGradient>
<linearGradient id="gBoxR" x1="0" y1="0" x2="1" y2="0"><stop offset="0" stop-color="#d0d0ee"/><stop offset="1" stop-color="#f4f4fb"/></linearGradient>
<linearGradient id="gPen" x1="0" y1="0" x2="1" y2="0"><stop offset="0" stop-color="#a8c8e0"/><stop offset="0.5" stop-color="#5a8ab8"/><stop offset="1" stop-color="#8ab0d0"/></linearGradient>
<linearGradient id="gPencil" x1="0" y1="0" x2="1" y2="0"><stop offset="0" stop-color="#f0e060"/><stop offset="1" stop-color="#f0a020"/></linearGradient>
<linearGradient id="gGrad" x1="0" y1="0" x2="1" y2="1"><stop offset="0" stop-color="#ffffff"/><stop offset="0.55" stop-color="#d8ecd8"/><stop offset="1" stop-color="#3aa048"/></linearGradient>
<linearGradient id="gMesh" x1="0" y1="0" x2="1" y2="1"><stop offset="0" stop-color="#80b4d8"/><stop offset="1" stop-color="#58b078"/></linearGradient>
<linearGradient id="gA" x1="0" y1="0" x2="1" y2="0"><stop offset="0" stop-color="#555"/><stop offset="0.5" stop-color="#222"/><stop offset="1" stop-color="#111"/></linearGradient>
<linearGradient id="gBtn" x1="0" y1="0" x2="0" y2="1"><stop offset="0" stop-color="#a6a8a5"/><stop offset="1" stop-color="#d7d7d5"/></linearGradient>
</defs>
<!-- selector arrow -->
<path d="M14 140.8V155L17.1 152.2L19.5 157.2L21.3 156.3L18.9 151.5L22.4 151.2Z" fill="#000" stroke="#f0f0f0" stroke-width="0.5" stroke-linejoin="round"/>
<!-- node tool -->
<path d="M12.5 175.5L25.8 172.1M12.5 175.5L9 189" stroke="#8a8a8a" stroke-width="0.9" fill="none"/>
<rect x="9" y="172.3" width="7" height="6.6" fill="#7b80cc" stroke="#5b62b8" stroke-width="0.6"/>
<rect x="24" y="170.2" width="3.8" height="3.8" fill="#6a70c8" stroke="#4b52b0" stroke-width="0.6"/>
<rect x="7.1" y="187.2" width="3.8" height="3.9" fill="#6a70c8" stroke="#4b52b0" stroke-width="0.6"/>
<path d="M15.3 178.9L25.7 185.4L21 189.6z" fill="#000"/>
<!-- rect -->
<rect x="8.6" y="213.7" width="18" height="18.6" fill="url(#gBlue)" stroke="#8f8f8f" stroke-width="0.9"/>
<!-- circle -->
<circle cx="17.6" cy="255.3" r="9.2" fill="url(#gPink)" stroke="#8f8f8f" stroke-width="0.9"/>
<!-- star -->
<path d="M13.9 276.3L21.1 281.3L18.4 289.8L9 289.8L6.3 281.7z" fill="url(#gYel)" stroke="#9a9a8a" stroke-width="0.8" stroke-linejoin="round"/>
<path d="M21.3 281.3L23.2 285.6L28.7 287.3L24.6 290.4L24.4 296.4L20.3 293.2L14.4 294.8L16.5 290.2L13.4 285.4L18.4 285.8z" fill="url(#gYel)" stroke="#9a9a8a" stroke-width="0.8" stroke-linejoin="round"/>
<!-- 3d box -->
<path d="M18.9 306L8.3 309.7V323.3L16 328.6L18.9 318.9z" fill="url(#gBoxL)"/>
<path d="M18.9 306L27.7 314L27.2 324.3L18.9 318.9z" fill="url(#gBoxR)"/>
<path d="M8.3 323.3L18.9 318.9L27.2 324.3L16 328.6z" fill="#46489a"/>
<path d="M18.9 306L8.3 309.7V323.3L16 328.6L27.2 324.3L27.7 314z" fill="none" stroke="#777" stroke-width="0.8" stroke-linejoin="round"/>
<!-- spiral -->
<g transform="translate(17.8 349.1) scale(1.13) translate(-17.2 -349.4)"><path d="M15.8 350.3c0.8 0.6 0.2 1.8-0.9 1.8c-1.8 0-2.6-2-2-3.6c0.8-2.2 3.6-2.8 5.5-1.6c2.6 1.6 2.8 5.2 1 7.4c-2.4 2.8-6.8 2.8-9.2 0.2c-2.8-3-2.6-8 0.4-10.8c3.4-3.2 9-3 12.2 0.4c3.2 3.4 3.4 8.6 1.4 12.6" fill="none" stroke="#4a4a4a" stroke-width="0.82"/></g>
<!-- pen -->
<path d="M7.3 383.3H18.2M7.3 383.3L13.6 392.6c1.2 2 1.5 4.6 0.9 6.8M10.2 401.8H16" fill="none" stroke="#7a7a7a" stroke-width="0.8"/>
<rect x="6.8" y="399.8" width="3.4" height="3.8" fill="#f4f4f4" stroke="#777" stroke-width="0.7"/>
<circle cx="17" cy="402.2" r="1.2" fill="#f4f4f4" stroke="#777" stroke-width="0.7"/>
<g transform="translate(17.9 401) rotate(22)">
<path d="M0 0L-2.8 -6.4H2.8z" fill="#3a3a3a"/>
<path d="M-3.6 -9.2H3.6L2.8 -6.2H-2.8z" fill="#fafafa" stroke="#999" stroke-width="0.4"/>
<path d="M0.6 -9.2H3.6L2.8 -6.2H0.4z" fill="#f0d070"/>
<path d="M-3.6 -9.2V-16.8a1.4 1.4 0 0 1 1.4-1.4h4.4a1.4 1.4 0 0 1 1.4 1.4V-9.2z" fill="url(#gPen)" stroke="#6a8aa8" stroke-width="0.4"/>
</g>
<!-- pencil -->
<path d="M8.3 413.9c1.5-0.2 3.2-0.4 4.3 0.2c0.4 1.6-3.6 5.2-4.2 7.2c-0.4 1.4 2.8 1 3.8 1.6c1.6 1 2 4.6 2.4 7c0.5 2.6 1.8 3.6 3.6 3.4c2.6-0.3 5.6-2.4 7.4-4.6" fill="none" stroke="#555" stroke-width="0.85" stroke-linejoin="round"/>
<g transform="translate(17.9 431.6) rotate(23)">
<path d="M0 0L-3.7 -8.4H3.7z" fill="#fff4dc" stroke="#999" stroke-width="0.4"/>
<path d="M0 0L-1.2 -2.8H1.2z" fill="#111"/>
<path d="M-3.7 -8.4V-15.6a1.4 1.4 0 0 1 1.4-1.4h4.6a1.4 1.4 0 0 1 1.4 1.4V-8.4z" fill="url(#gPencil)" stroke="#c89030" stroke-width="0.4"/>
</g>
<!-- calligraphy -->
<path d="M7.4 444.4C11 444 14.2 445.6 14.8 448.6C13 451.4 12.4 455.6 13.2 459.4C13.8 462 16.4 462.6 19.6 461.8C22.6 461 25.4 461.2 27.8 462.4C25.6 462.6 22.6 463.6 19.4 464.8C15.4 466 11.4 465.2 10 461.6C8.6 458 9.6 453.4 9.4 450C9.2 447.6 8.6 445.8 7.4 444.4Z" fill="#000"/>
<path d="M16.8 462.6L15.6 453.4L21.2 450.8L25 453.4z" fill="#f4d470" stroke="#777" stroke-width="0.4"/>
<path d="M16.4 455L19 452.2" stroke="#fff" stroke-width="1"/>
<path d="M19.9 455.2L17.9 459.7" stroke="#111" stroke-width="0.9"/>
<path d="M21 445.4L28.2 447.4L25.8 449.4L21.6 448.4z" fill="#7ab0d8"/>
<path d="M21.6 448.4L25.8 449.4L25.1 451.2L21.3 450.6z" fill="#c02020"/>
<path d="M20.6 445.2L17 462" stroke="#aaa" stroke-width="0.5"/>
<!-- text A -->
<path d="M8.4 494.4L14.2 476.8H19.6L25.4 494.4H20.8L19.6 490.6H14L12.8 494.4zM15 487.3H18.6L16.8 481.2z" fill="url(#gA)"/>
<path d="M25.2 476.6h2.6M26.5 476.6v18M25.2 494.6h2.6" stroke="#777" stroke-width="0.8" fill="none"/>
<!-- gradient -->
<rect x="6.8" y="519.4" width="21.6" height="21" fill="url(#gGrad)" stroke="#56b060" stroke-width="0.6"/>
<path d="M11.5 524L23.5 534.6" stroke="#333" stroke-width="0.8"/>
<rect x="8.4" y="521.4" width="4.4" height="4.4" fill="#fff" stroke="#777" stroke-width="0.8"/>
<rect x="21" y="532.8" width="4.6" height="4.6" fill="#fff" stroke="#777" stroke-width="0.8"/>
<!-- mesh -->
<path d="M9.5 552.6L25.8 556.8L23.5 569.6L8.8 566z" fill="url(#gMesh)" stroke="#555" stroke-width="0.6"/>
<rect x="7" y="550.3" width="4.6" height="4.4" fill="#fff" stroke="#666" stroke-width="0.8"/>
<rect x="23.5" y="550.5" width="4.6" height="4.6" fill="#fff" stroke="#666" stroke-width="0.8"/>
<rect x="7" y="566.8" width="4.6" height="4.6" fill="#fff" stroke="#666" stroke-width="0.8"/>
<rect x="23.5" y="567" width="4.6" height="4.6" fill="#fff" stroke="#666" stroke-width="0.8"/>
<defs>
<linearGradient id="gGamut" x1="0" y1="0" x2="0" y2="1"><stop offset="0" stop-color="#5cb860"/><stop offset="0.4" stop-color="#d8d070"/><stop offset="0.7" stop-color="#d86050"/><stop offset="1" stop-color="#b050c0"/></linearGradient>
<linearGradient id="gLock" x1="0" y1="0" x2="1" y2="0"><stop offset="0" stop-color="#f07800"/><stop offset="0.55" stop-color="#f2cc50"/><stop offset="1" stop-color="#f8ec98"/></linearGradient>
<linearGradient id="gOne" x1="0" y1="0" x2="0" y2="1"><stop offset="0" stop-color="#ffffff"/><stop offset="1" stop-color="#e2e2e0"/></linearGradient>
<linearGradient id="gTan" x1="0" y1="0" x2="0" y2="1"><stop offset="0" stop-color="#c9bca8"/><stop offset="1" stop-color="#a89a84"/></linearGradient>
<g id="snapA"><path d="M0 -4.7L8.2 3.1" stroke="#555" stroke-width="0.9"/><path d="M6.2 2.2l3 2.4-0.6-3.6z" fill="#222"/><path d="M-3.2 -4.7l3.2-3.2 3.2 3.2-3.2 3.2z" fill="#9ea2e2" stroke="#4a50c4" stroke-width="0.9"/><path d="M6.7 4.7l3.2-3.2 3.2 3.2-3.2 3.2z" fill="#9ea2e2" stroke="#4a9a58" stroke-width="0.9"/></g>
</defs>
<!-- ruler lock button -->
<rect x="43.5" y="131" width="15.6" height="15.4" rx="1.5" fill="#fafaf9" stroke="#8a8a8a" stroke-width="0.8"/>
<path d="M48.2 139v-2.6a3 3 0 0 1 6 0v2.6" fill="none" stroke="#4a4a4a" stroke-width="0.9"/>
<rect x="46.3" y="138.3" width="9.8" height="6.4" fill="url(#gLock)" stroke="#b08840" stroke-width="0.5"/>
<rect x="50.6" y="140" width="1.2" height="2.8" fill="#222"/>
<!-- one button -->
<rect x="871.5" y="130.8" width="15" height="14.8" rx="1.5" fill="url(#gOne)" stroke="#8a8a8a" stroke-width="0.8"/>
<path d="M877.4 135.4l2.2-1.6h1.4v7.4h-1.8v-5.2l-1.4 0.8z" fill="#fff" stroke="#555" stroke-width="0.7"/>
<!-- CMS -->
<rect x="870.8" y="617.8" width="17.1" height="16.2" rx="1" fill="#fefefe"/>
<path d="M876 619.8c3.2 0.6 6.6 5 9.6 8.5c-2.8 1.8-5.2 2.8-7.8 4.2c-1.2-4-2.4-8.6-1.8-12.7z" fill="url(#gGamut)"/>
<!-- snap icons -->
<use href="#snapA" transform="translate(904.7 149.9)"/>
<use href="#snapA" transform="translate(904.7 194.7)"/>
<path d="M916.2 218.2v14" stroke="#bbb" stroke-width="0.7" stroke-dasharray="2 1.2"/>
<circle cx="903.5" cy="232.3" r="0.5" fill="#bbb"/>
<path d="M914.6 250v10" stroke="#ccc" stroke-width="0.6"/>
<path d="M914.6 260.6l3.3 3.3-3.3 3.3-3.3-3.3z" fill="#a6b6a6"/>
<path d="M914.2 283.8l3.3 3.3-3.3 3.3-3.3-3.3z" fill="#a6b6a6"/>
<path d="M914.2 279v4M914.2 290.6v4" stroke="#ccc" stroke-width="0.6"/>
<path d="M909.9 315.2l3.3 3.3-3.3 3.3-3.3-3.3z" fill="#a6b6a6"/>
<path d="M916.3 313.6v13.9H903" fill="none" stroke="#aaa" stroke-width="0.8" stroke-dasharray="2.5 1.2"/>
<use href="#snapA" transform="translate(904.7 367.8)"/>
<path d="M903.6 393.9c4.4 0.4 8.6 2.6 7.6 8.2c-0.3 1.2-1 2.4-1.6 3.2M909.6 405.3l5.8-4.4" fill="none" stroke="#60b060" stroke-width="0.9"/>
<path d="M903.6 437.8L916.2 425.3M903.6 433L916.2 430" stroke="#555" stroke-width="0.8"/>
<path d="M909.9 428.3l3.2 3.2-3.2 3.2-3.2-3.2z" fill="#a4a6e4" stroke="#50a060" stroke-width="0.7"/>
<path d="M903.2 457.2c4 0 7.4 2.6 8.2 6.2c0.3 1.6 0.4 3.4 0.3 5M912 470l4.5-5.5" fill="none" stroke="#555" stroke-width="0.8"/>
<path d="M908.8 465.3l3.2 3.2-3.2 3.2-3.2-3.2z" fill="#a4a6e4" stroke="#50a060" stroke-width="0.7"/>
<path d="M903 489c3 0.4 6.4 2.4 7 5.6c0.3 1.6 0.3 3.6 0.5 6M910.5 500.6l5.5-4.6" fill="none" stroke="#555" stroke-width="0.8"/>
<path d="M908.8 488.1l3.2 3.2-3.2 3.2-3.2-3.2z" fill="#a4a6e4" stroke="#50a060" stroke-width="0.7"/>
<path d="M903 532.6L915.6 519.6M904.4 534.2L917 521.2" stroke="#e07050" stroke-width="0.8"/>
<path d="M909.4 524.2l3.2 3.2-3.2 3.2-3.2-3.2z" fill="#a4a6e4" stroke="#50a060" stroke-width="0.7"/>
<use href="#snapA" transform="translate(904.8 572.8)"/>
<!-- toolbar2: select all in all layers -->
<path d="M8.2 103.4a1 1 0 0 1 1-1h9.6l4.6 4.4v13.2a1 1 0 0 1-1 1h-13.2a1 1 0 0 1-1-1z" fill="#fafafa" stroke="#8a8a8a" stroke-width="0.9"/>
<rect x="9.8" y="107.4" width="7" height="9.8" fill="#4f86cc"/>
<rect x="17.2" y="107.6" width="3.8" height="3.8" fill="#a8c4e8"/>
<rect x="17.2" y="111.8" width="3.8" height="2.4" fill="#a8c4e8"/>
<path d="M9.8 110.6h7M9.8 113.8h7" stroke="#9cc0ea" stroke-width="0.7"/>
<rect x="16.9" y="114.6" width="2.6" height="3.1" fill="#111"/>
<!-- select same/stacks in brackets -->
<path d="M41.3 103.5v16M56.8 103.5v16" stroke="#b4b4b4" stroke-width="0.8" stroke-dasharray="5 1.2 8 1.2"/>
<circle cx="41.4" cy="103.3" r="0.7" fill="#666"/><circle cx="56.7" cy="103.3" r="0.7" fill="#666"/>
<circle cx="41.4" cy="119.4" r="0.7" fill="#666"/><circle cx="56.7" cy="119.4" r="0.7" fill="#666"/>
<path d="M43.5 111.4l2.9 5h8.4l-2.9-5" fill="#e4e6e8" stroke="#7a7a7a" stroke-width="0.8" stroke-linejoin="round"/>
<path d="M43.5 108.8l2.9 5h8.4l-2.9-5" fill="#eef0f2" stroke="#7a7a7a" stroke-width="0.8" stroke-linejoin="round"/>
<path d="M43.4 106.3h7.5l3.2 5h-7.6z" fill="#f8f9fb" stroke="#7a7a7a" stroke-width="0.8" stroke-linejoin="round"/>
<!-- deselect -->
<rect x="77.6" y="109.9" width="9.2" height="7" fill="#e2d3a6"/>
<rect x="77.6" y="116" width="9.2" height="1" fill="#b4b6b8"/>
<circle cx="84.8" cy="110.9" r="3.9" fill="#cbccd1"/>
<path d="M75.8 104.4H90.4V119.4" fill="none" stroke="#c88a7e" stroke-width="1.1" stroke-dasharray="3.4 1.5"/>
<path d="M75.8 104.4V119.4H90.4" fill="none" stroke="#ead8d2" stroke-width="0.6" stroke-dasharray="3.4 1.5"/>
<!-- rotate ccw -->
<path id="rotccw" d="M134.8 105.4V108.4H129.8Q128.8 108.4 128.8 109.4V112.2H131.2L126.6 117.6L122 112.2H125.4V109.2Q125.4 105.4 129.2 105.4Z" fill="#f1dfcb" stroke="#e6cdb2" stroke-width="0.8" stroke-linejoin="round"/>
<!-- rotate cw -->
<use href="#rotccw" transform="translate(292.8 0) scale(-1 1)"/>
<!-- flip h -->
<path d="M189.2 111.4l4.2-4v2.6h6.8v-2.6l4.2 4-4.2 4v-2.6h-6.8v2.6z" fill="#f0dcc8" stroke="#e6ccb2" stroke-width="0.7" stroke-linejoin="round"/>
<!-- flip v -->
<path d="M231.2 103.9l4.4 4.2h-2.7v6.6h2.7l-4.4 4.2-4.4-4.2h2.7v-6.6h-2.7z" fill="#f0dcc8" stroke="#e6ccb2" stroke-width="0.7" stroke-linejoin="round"/>
<!-- lower to bottom -->
<g fill="#b8b8b8"><rect x="278.3" y="104.3" width="6.6" height="2"/><rect x="278.3" y="107.4" width="6.6" height="2"/><rect x="278.3" y="110.5" width="6.6" height="2"/><rect x="278.3" y="113.6" width="6.6" height="2"/></g>
<rect x="269" y="116.6" width="15.8" height="2.4" fill="url(#gTan)"/>
<path d="M272.5 104v9.6" stroke="#9a9a9a" stroke-width="0.9"/><path d="M270.3 112l2.2 3.2 2.2-3.2z" fill="#9a9a9a"/>
<!-- lower -->
<g fill="#b8b8b8"><rect x="311.2" y="104.3" width="6.8" height="2"/><rect x="311.2" y="107.4" width="6.8" height="2"/><rect x="311.2" y="110.5" width="6.8" height="2"/><rect x="311.2" y="116.8" width="6.8" height="2"/></g>
<rect x="302.3" y="113.5" width="15.8" height="2.4" fill="url(#gTan)"/>
<path d="M308.6 106.4c-2 0-3.4 1.2-3.6 3.2" fill="none" stroke="#9a9a9a" stroke-width="0.9"/><path d="M303 108.6l2 2.6 2.2-2.4z" fill="#9a9a9a"/>
<!-- raise -->
<g fill="#b8b8b8"><rect x="337.4" y="104.3" width="6.6" height="2"/><rect x="337.4" y="110.5" width="6.6" height="2"/><rect x="337.4" y="113.6" width="8.6" height="2"/><rect x="337.4" y="116.8" width="6.6" height="2"/></g>
<rect x="337.4" y="107.3" width="15.4" height="2.4" fill="url(#gTan)"/>
<path d="M347 115.8c2 0 3.4-1.2 3.6-3.2" fill="none" stroke="#9a9a9a" stroke-width="0.9"/><path d="M348.6 113.4l2-2.6 2.2 2.4z" fill="#9a9a9a"/>
<!-- raise to top -->
<rect x="371.9" y="104.2" width="15.2" height="2.4" fill="url(#gTan)"/>
<g fill="#b8b8b8"><rect x="371.9" y="107.6" width="6.4" height="2"/><rect x="371.9" y="110.7" width="6.4" height="2"/><rect x="371.9" y="113.8" width="6.4" height="2"/><rect x="371.9" y="116.9" width="6.4" height="2"/></g>
<path d="M383.7 109v9.8" stroke="#9a9a9a" stroke-width="0.9"/><path d="M381.5 110.6l2.2-3.2 2.2 3.2z" fill="#9a9a9a"/>
<!-- W lock -->
<path d="M794.6 110.2v-3.4a3 3 0 0 1 6-0.4" fill="none" stroke="#555" stroke-width="0.9"/>
<path d="M792.6 110.6l10.8-0.6 0.4 7.4-10.6 0.8z" fill="#f4eaa8" stroke="#8a8a70" stroke-width="0.6"/>
<path d="M797.6 112.6l1.2-0.8v4.2" fill="none" stroke="#111" stroke-width="0.9"/>
<!-- inkscape logo -->
<linearGradient id="gLogo" x1="0.7" y1="0" x2="0.2" y2="1"><stop offset="0" stop-color="#e8e8e8"/><stop offset="0.5" stop-color="#a0a0a0"/><stop offset="1" stop-color="#303030"/></linearGradient>
<path d="M7 10.9L14.8 17.6L12.4 19.6L13.2 21.2L11.4 22L9.4 21.6L8.4 24.9L6.4 24.6L6 22.2L3.4 21.4L2.2 20.2L3 19.4L0.9 17.4z" fill="#0a0a0a"/>
<path d="M7 11.6L11.2 15.2L6.6 18.6L1.9 17.3z" fill="url(#gLogo)"/>
<path d="M2.6 18.4L6 19.4L5.6 21.2L3.4 20.6z" fill="#7a7a7a"/>
<path d="M9.2 21.4L11.4 22L9.2 23.4z" fill="#2a3a50"/>
<path d="M12.8 21.8l2-0.8" stroke="#666" stroke-width="0.8"/>
</svg>
</body></html>
